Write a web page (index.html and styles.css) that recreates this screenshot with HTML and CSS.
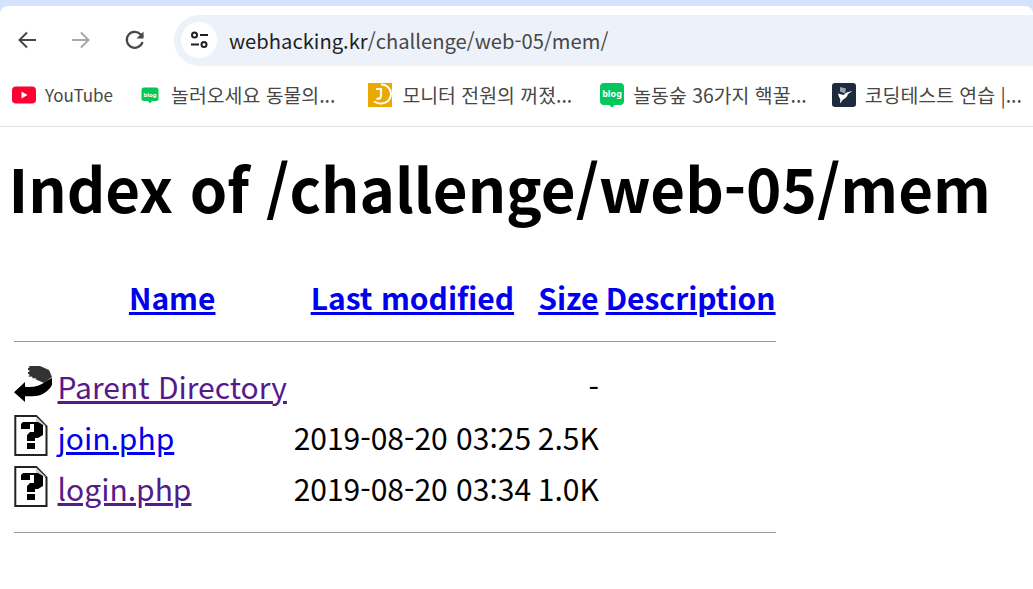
FILE: index.html
```html
<!DOCTYPE html>
<html lang="ko">
<head>
    <meta charset="UTF-8">
    <meta name="viewport" content="width=device-width, initial-scale=1.0">
    <title>Index of /challenge/web-05/mem</title>
    <link rel="stylesheet" href="styles.css">
</head>
<body>
    <div class="browser">
        <div class="toolbar">
            <button class="nav-btn">
                <svg width="24" height="24" viewBox="0 0 24 24"><path d="M21 12H5M12 4.500 4.500 12l7.500 7.500" fill="none" stroke="#474747" stroke-width="2"/></svg>
            </button>
            <button class="nav-btn">
                <svg width="24" height="24" viewBox="0 0 24 24"><path d="M3 12h16M12 4.500l7.500 7.500-7.500 7.500" fill="none" stroke="#a8a8a8" stroke-width="2"/></svg>
            </button>
            <button class="nav-btn">
                <svg width="24" height="24" viewBox="0 0 24 24"><path d="M19.500 14A8 8 0 1 1 17.500 6.200L20 8.800" fill="none" stroke="#474747" stroke-width="2.200"/><path d="M20.500 3.500v7h-7z" fill="#474747"/></svg>
            </button>
            <div class="omnibox">
                <span class="site-info">
                    <svg width="20" height="20" viewBox="0 0 20 20" fill="none" stroke="#1f1f1f" stroke-width="2"><circle cx="5.500" cy="5" r="2.500"/><path d="M11 5h8M2 14.500h8"/><circle cx="15" cy="14.500" r="2.500"/></svg>
                </span>
                <span class="url">webhacking.kr<span class="url-path">/challenge/web-05/mem/</span></span>
            </div>
        </div>
        <div class="bookmarks">
            <a class="bookmark bm-youtube">
                <svg width="24" height="18" viewBox="0 0 24 18"><rect width="24" height="17" y="0.500" rx="4" fill="#ff0033"/><path d="M9.500 5.500v7l6-3.500z" fill="#fff"/></svg>
                <span>YouTube</span>
            </a>
            <a class="bookmark bm-blog1">
                <svg width="18" height="18" viewBox="0 0 18 18"><path d="M3 1.500h12a2.500 2.500 0 0 1 2.500 2.500v8.500a2.500 2.500 0 0 1-2.500 2.500h-4l-2 2.500-2-2.500H3a2.500 2.500 0 0 1-2.500-2.500V4A2.500 2.500 0 0 1 3 1.500z" fill="#03c75a"/><text x="9" y="10.500" class="blog-mark">blog</text></svg>
                <span>놀러오세요 동물의...</span>
            </a>
            <a class="bookmark bm-monitor">
                <svg width="24" height="24" viewBox="0 0 24 24"><rect width="24" height="24" fill="#eba900"/><path d="M13 1.500a9.500 9.500 0 0 1 1 19c-3 .3-5.500-.5-8-2" fill="none" stroke="#fff" stroke-width="2"/><path d="M8 6h5v7c0 2.200-2 3.200-4.500 2.500" fill="none" stroke="#fff" stroke-width="2.200"/></svg>
                <span>모니터 전원의 꺼졌...</span>
            </a>
            <a class="bookmark bm-blog2">
                <svg width="24" height="24" viewBox="0 0 24 24"><path d="M4 0h16a4 4 0 0 1 4 4v14a4 4 0 0 1-4 4h-5.500L12 25l-2.500-3H4a4 4 0 0 1-4-4V4a4 4 0 0 1 4-4z" fill="#03c75a"/><text x="12" y="13.500" class="blog-mark blog-big">blog</text></svg>
                <span>놀동숲 36가지 핵꿀...</span>
            </a>
            <a class="bookmark bm-coding">
                <svg width="24" height="24" viewBox="0 0 24 24"><rect width="24" height="24" rx="3" fill="#1e2a3e"/><path d="M8 4l6 1.500-1 5-5-2z" fill="#9aa3b0"/><path d="M6 10.500l5.500 1.500 3-2.500 6-1.500-4.500 3c-.8 3-2.800 4.500-5 5.500L8 20.500l.3-4.500C7 14.500 6.500 12.500 6 10.500z" fill="#fff"/></svg>
                <span>코딩테스트 연습 |...</span>
            </a>
        </div>
    </div>

    <div class="page">
        <h1>Index of /challenge/web-05/mem</h1>
        <table>
            <tr>
                <th class="col-icon"></th>
                <th><a href="#">Name</a></th>
                <th><a href="#">Last modified</a></th>
                <th><a href="#">Size</a></th>
                <th><a href="#">Description</a></th>
            </tr>
            <tr><th colspan="5"><hr></th></tr>
            <tr>
                <td>
                    <svg class="file-icon" viewBox="0 0 38 42">
                        <path d="M14 2h12l9 4 3 7-8 6-16-7z" fill="#333"/>
                        <path d="M14.700 2v10l9 4" fill="none" stroke="#fff" stroke-width="1.200" stroke-dasharray="2 2"/>
                        <path d="M0 28.300 11 18v4.700c8 .8 15-.7 20.500-5 3-2 5.500-3 8-4.500.5 10-9 19-21 19-2.500.2-5 .2-7.500.1V38z" fill="#000"/>
                    </svg>
                </td>
                <td><a class="seen" href="#">Parent Directory</a></td>
                <td></td>
                <td class="size">-</td>
                <td></td>
            </tr>
            <tr>
                <td>
                    <svg class="file-icon" viewBox="0 0 38 42">
                        <path d="M1.300 1h21L32.500 11.500V40H1.300z" fill="#fff" stroke="#222" stroke-width="2"/>
                        <path d="M22 1.500V11h10z" fill="#ccc"/>
                        <path d="M9 7h15l5 3v10l-5 3h-3v3H13v-6l3-3h4v-8h-4v5H7v-5zM13 28h8v6h-8z" fill="#000"/>
                    </svg>
                </td>
                <td><a href="#">join.php</a></td>
                <td class="date">2019-08-20 03:25</td>
                <td class="size">2.5K</td>
                <td></td>
            </tr>
            <tr>
                <td>
                    <svg class="file-icon" viewBox="0 0 38 42">
                        <path d="M1.300 1h21L32.500 11.500V40H1.300z" fill="#fff" stroke="#222" stroke-width="2"/>
                        <path d="M22 1.500V11h10z" fill="#ccc"/>
                        <path d="M9 7h15l5 3v10l-5 3h-3v3H13v-6l3-3h4v-8h-4v5H7v-5zM13 28h8v6h-8z" fill="#000"/>
                    </svg>
                </td>
                <td><a class="seen" href="#">login.php</a></td>
                <td class="date">2019-08-20 03:34</td>
                <td class="size">1.0K</td>
                <td></td>
            </tr>
            <tr><th colspan="5"><hr></th></tr>
        </table>
    </div>
</body>
</html>
```

FILE: styles.css
```css
html, body {
    margin: 0;
    padding: 0;
}
body {
    background: white;
    overflow: hidden;
    font-family: "Noto Sans CJK KR", "Noto Sans", sans-serif;
}
.browser {
    background: #d3e3fd;
    padding-top: 6px;
}
.toolbar {
    display: flex;
    align-items: center;
    height: 64px;
    padding-top: 2px;
    background: white;
    border-radius: 8px 8px 0 0;
    padding-left: 15px;
}
.nav-btn {
    width: 24px;
    height: 24px;
    padding: 0;
    margin-right: 30px;
    border: none;
    background: none;
    flex: none;
}
.omnibox {
    display: flex;
    align-items: center;
    flex: 1;
    height: 51px;
    margin-left: -3px;
    padding-left: 7px;
    background: #edf2fa;
    border-radius: 26px 0 0 26px;
}
.site-info {
    display: flex;
    align-items: center;
    justify-content: center;
    width: 36px;
    height: 36px;
    border-radius: 50%;
    background: white;
}
.url {
    margin-left: 12px;
    font-size: 20.2px;
    color: #1f1f1f;
}
.url-path {
    color: #474747;
}
.bookmarks {
    display: flex;
    align-items: center;
    height: 45px;
    padding-bottom: 9px;
    background: white;
    border-bottom: 1px solid #e3e3e3;
    padding-left: 12px;
}
.bookmark {
    display: flex;
    align-items: center;
    font-size: 19.4px;
    color: #474747;
    white-space: nowrap;
    flex: none;
}
.bm-youtube { font-size: 17px; }
.bm-youtube span { margin-left: 9px; }
.bm-blog1 { margin-left: 28px; }
.bm-blog1 span { margin-left: 12px; }
.bm-monitor { margin-left: 33px; }
.bm-monitor span { margin-left: 10px; }
.bm-blog2 { margin-left: 28px; }
.bm-blog2 span { margin-left: 9px; }
.bm-coding { margin-left: 25px; }
.bm-coding span { margin-left: 9px; }
.blog-mark {
    font-family: "Noto Sans", sans-serif;
    font-size: 6px;
    font-weight: 700;
    fill: white;
    text-anchor: middle;
}
.blog-big {
    font-size: 9px;
}
.page {
    padding: 0 8.4px;
    font-size: 30px;
    line-height: 44.25px;
}
h1 {
    margin: 16px 0 40px;
    font-size: 60px;
    font-weight: 700;
    line-height: 87px;
    white-space: nowrap;
}
table {
    border-collapse: separate;
    border-spacing: 3px;
    margin-left: 0.5px;
}
th, td {
    padding: 1.875px;
    white-space: nowrap;
}
a {
    color: #0000ee;
}
a.seen {
    color: #551a8b;
}
hr {
    margin: 15.5px 0 14.5px;
    border: none;
    border-top: 1px solid #999;
}
.file-icon {
    display: block;
    width: 38px;
    height: 42px;
    margin: -2px -1px 0 0;
}
.size {
    text-align: right;
}
.date {
    text-align: left;
}
```
